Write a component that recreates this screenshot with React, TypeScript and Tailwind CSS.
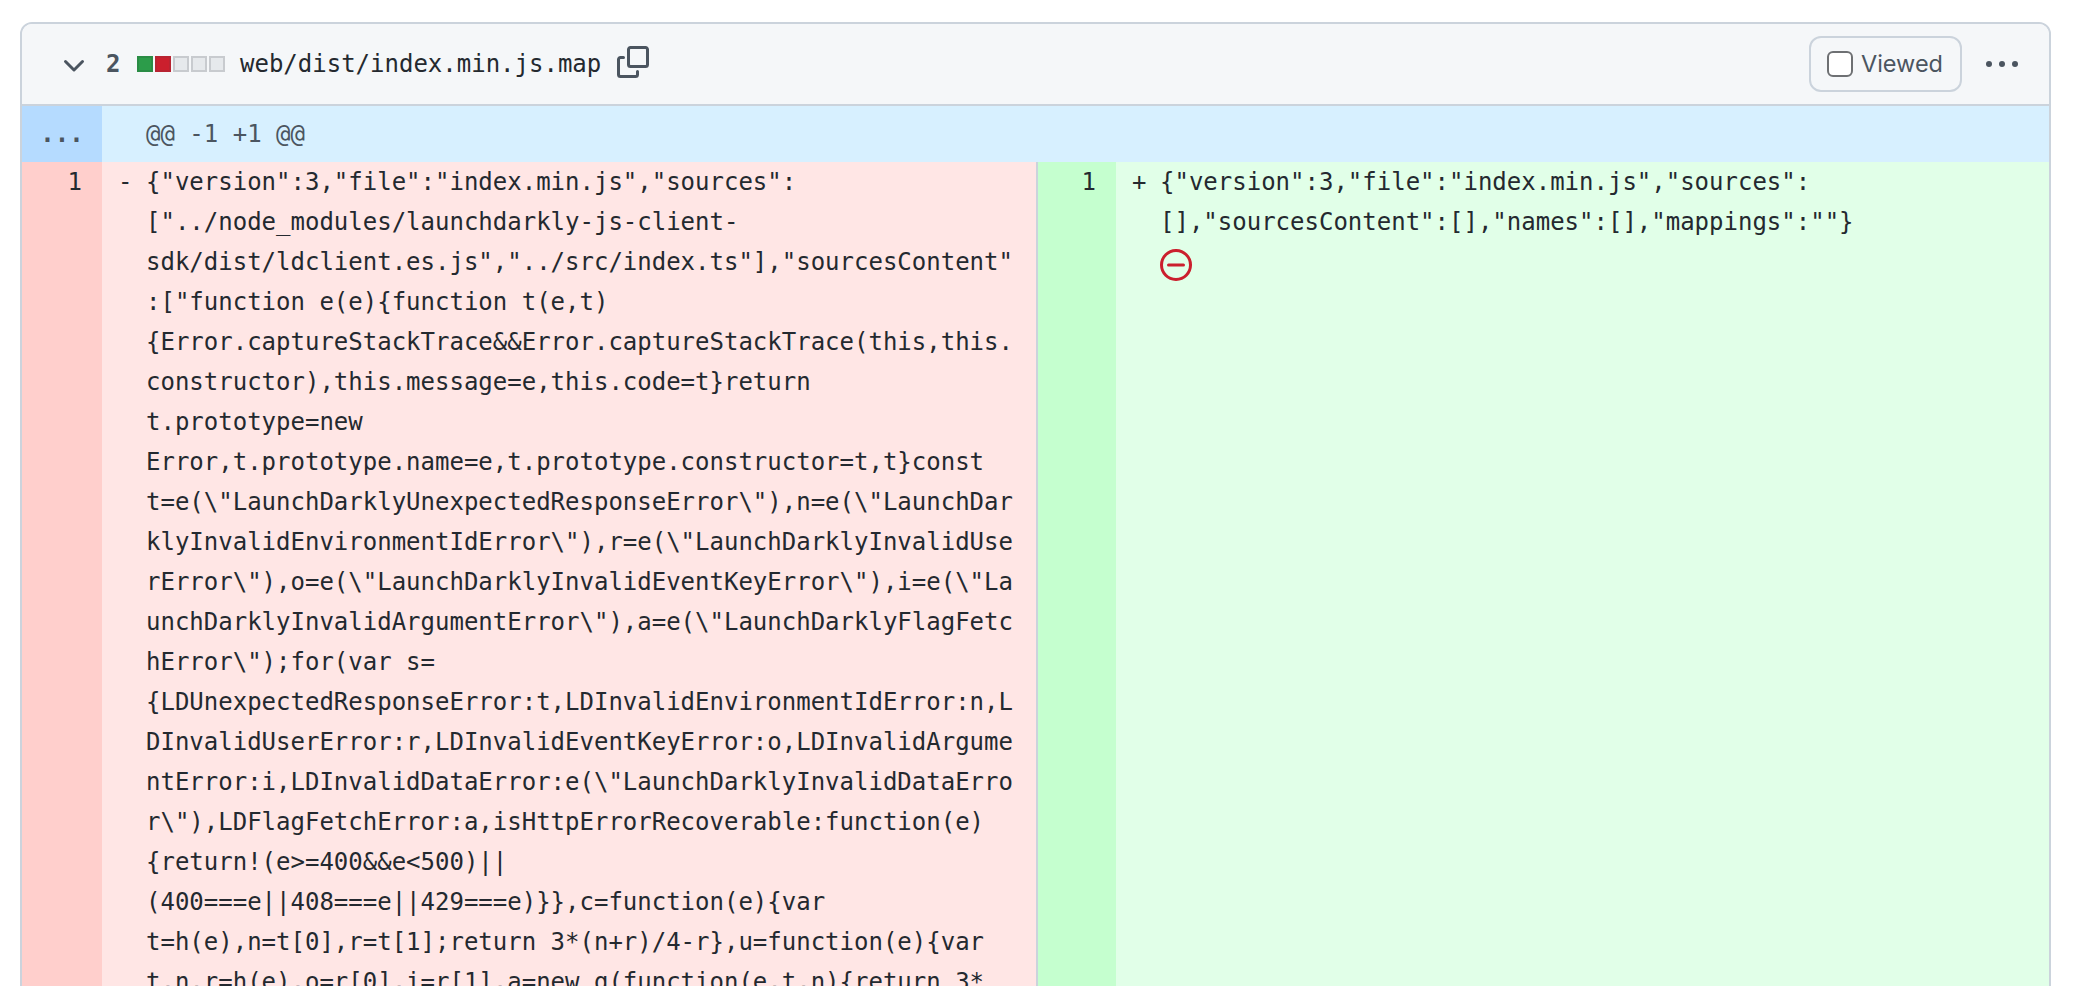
const leftLines = [
  '{"version":3,"file":"index.min.js","sources":',
  '["../node_modules/launchdarkly-js-client-',
  'sdk/dist/ldclient.es.js","../src/index.ts"],"sourcesContent"',
  ':["function e(e){function t(e,t)',
  "{Error.captureStackTrace&&Error.captureStackTrace(this,this.",
  "constructor),this.message=e,this.code=t}return",
  "t.prototype=new",
  "Error,t.prototype.name=e,t.prototype.constructor=t,t}const",
  't=e(\\"LaunchDarklyUnexpectedResponseError\\"),n=e(\\"LaunchDar',
  'klyInvalidEnvironmentIdError\\"),r=e(\\"LaunchDarklyInvalidUse',
  'rError\\"),o=e(\\"LaunchDarklyInvalidEventKeyError\\"),i=e(\\"La',
  'unchDarklyInvalidArgumentError\\"),a=e(\\"LaunchDarklyFlagFetc',
  'hError\\");for(var s=',
  "{LDUnexpectedResponseError:t,LDInvalidEnvironmentIdError:n,L",
  "DInvalidUserError:r,LDInvalidEventKeyError:o,LDInvalidArgume",
  'ntError:i,LDInvalidDataError:e(\\"LaunchDarklyInvalidDataErro',
  'r\\"),LDFlagFetchError:a,isHttpErrorRecoverable:function(e)',
  "{return!(e>=400&&e<500)||",
  "(400===e||408===e||429===e)}},c=function(e){var",
  "t=h(e),n=t[0],r=t[1];return 3*(n+r)/4-r},u=function(e){var",
  "t,n,r=h(e),o=r[0],i=r[1],a=new g(function(e,t,n){return 3*",
];

const rightLines = [
  '{"version":3,"file":"index.min.js","sources":',
  '[],"sourcesContent":[],"names":[],"mappings":""}',
];

const mono = "font-['DejaVu_Sans_Mono',monospace] text-[24px] leading-[40px]";

const App = () => {
  return (
    <div className="h-[986px] overflow-hidden bg-white pl-[20px] pr-[29px] pt-[22px]">
      <div className="h-[1100px] rounded-t-[12px] border-2 border-[#cbd3dc] overflow-hidden">
        <div className="flex h-[82px] items-center border-b-2 border-[#cbd3dc] bg-[#f5f7f9] pl-[36px] pr-[31px]">
          <svg viewBox="0 0 16 16" className="mt-[4px] h-[32px] w-[32px] fill-[#4b5560]">
            <path d="M12.78 5.22a.749.749 0 0 1 0 1.06l-4.25 4.25a.749.749 0 0 1-1.06 0L3.22 6.28a.749.749 0 1 1 1.06-1.06L8 8.939l3.72-3.719a.749.749 0 0 1 1.06 0Z" />
          </svg>
          <span className={`ml-[16px] w-[15px] text-[#4b5560] font-bold ${mono}`}>2</span>
          <div className="ml-[16px] flex gap-[2px]">
            <span className="h-[16px] w-[16px] border-2 border-[#2a8c45] bg-[#2c9c4a]"></span>
            <span className="h-[16px] w-[16px] border-2 border-[#b82432] bg-[#cb1f2d]"></span>
            <span className="h-[16px] w-[16px] border-2 border-[#c8cbcf] bg-[#e6e9ec]"></span>
            <span className="h-[16px] w-[16px] border-2 border-[#c8cbcf] bg-[#e6e9ec]"></span>
            <span className="h-[16px] w-[16px] border-2 border-[#c8cbcf] bg-[#e6e9ec]"></span>
          </div>
          <span className={`ml-[15px] text-[#24292f] ${mono}`}>web/dist/index.min.js.map</span>
          <svg viewBox="0 0 16 16" className="-mt-[4px] ml-[16px] h-[32px] w-[32px] fill-[#4b5560]">
            <path d="M0 6.75C0 5.784.784 5 1.75 5h1.5a.75.75 0 0 1 0 1.5h-1.5a.25.25 0 0 0-.25.25v7.5c0 .138.112.25.25.25h7.5a.25.25 0 0 0 .25-.25v-1.5a.75.75 0 0 1 1.5 0v1.5A1.75 1.75 0 0 1 9.25 16h-7.5A1.75 1.75 0 0 1 0 14.25Z" />
            <path d="M5 1.75C5 .784 5.784 0 6.75 0h7.5C15.216 0 16 .784 16 1.75v7.5A1.75 1.75 0 0 1 14.25 11h-7.5A1.75 1.75 0 0 1 5 9.25Zm1.75-.25a.25.25 0 0 0-.25.25v7.5c0 .138.112.25.25.25h7.5a.25.25 0 0 0 .25-.25v-7.5a.25.25 0 0 0-.25-.25Z" />
          </svg>
          <div className="ml-auto flex h-[56px] items-center gap-[8px] rounded-[12px] border-2 border-[#cbd3dc] pl-[16px] pr-[17px]">
            <span className="h-[26px] w-[26px] rounded-[6px] border-2 border-[#6e7073] bg-white"></span>
            <span className="font-['Inter',sans-serif] text-[23.5px] text-[#4b5560]">Viewed</span>
          </div>
          <svg viewBox="0 0 32 32" className="ml-[24px] h-[32px] w-[32px] fill-[#4b5560]">
            <circle cx="3" cy="16" r="3" />
            <circle cx="16" cy="16" r="3" />
            <circle cx="29" cy="16" r="3" />
          </svg>
        </div>
        <div className="flex h-[56px] bg-[#d7f0ff]">
          <div className={`w-[80px] bg-[#b5dbff] text-center font-bold text-[#4b5560] ${mono} leading-[56px]`}>...</div>
          <div className={`pl-[44px] text-[#4b5560] ${mono} leading-[56px]`}>@@ -1 +1 @@</div>
        </div>
        <div className="flex">
          <div className="flex h-[900px] w-[1014px] bg-[#ffe6e5]">
            <div className={`w-[80px] shrink-0 bg-[#ffcfcc] pr-[20px] text-right text-[#24292f] ${mono}`}>1</div>
            <div className={`w-[44px] shrink-0 pl-[16px] text-[#24292f] ${mono}`}>-</div>
            <div className={`whitespace-pre text-[#24292f] ${mono}`}>
              {leftLines.map((line) => (
                <div key={line}>{line}</div>
              ))}
            </div>
          </div>
          <div className="flex h-[900px] flex-1 border-l-2 border-[#cbd3dc] bg-[#e1ffe8]">
            <div className={`w-[78px] shrink-0 bg-[#c5ffcf] pr-[20px] text-right text-[#24292f] ${mono}`}>1</div>
            <div className={`w-[44px] shrink-0 pl-[16px] text-[#24292f] ${mono}`}>+</div>
            <div className={`whitespace-pre text-[#24292f] ${mono}`}>
              {rightLines.map((line) => (
                <div key={line}>{line}</div>
              ))}
              <svg viewBox="0 0 16 16" className="mt-[7px] h-[32px] w-[32px] fill-[#cb1f2d]">
                <path d="M2.343 13.657A8 8 0 1 1 13.658 2.343 8 8 0 0 1 2.343 13.657ZM3.404 3.404a6.5 6.5 0 1 0 9.193 9.192 6.5 6.5 0 0 0-9.193-9.192Z" />
                <path d="M4.25 7.25h7.5a.75.75 0 0 1 0 1.5h-7.5a.75.75 0 0 1 0-1.5Z" />
              </svg>
            </div>
          </div>
        </div>
      </div>
    </div>
  );
};

export default App;
